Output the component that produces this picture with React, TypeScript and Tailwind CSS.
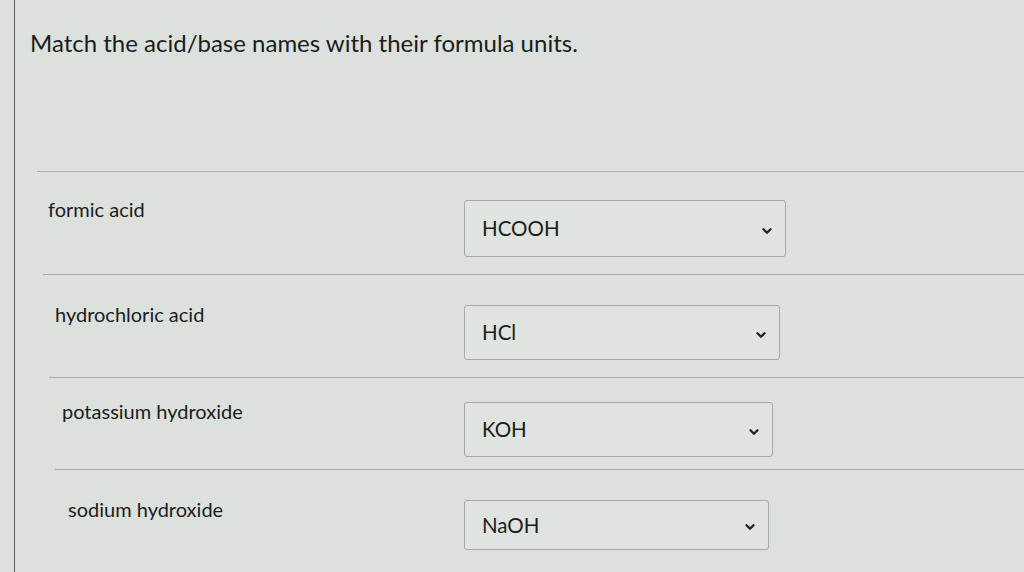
import { ChevronDown } from 'lucide-react';

const rows = [
  { name: 'formic acid', value: 'HCOOH', rowCls: 'h-[103px] ml-[22px]', labelCls: 'pl-[11px] pt-[24px]', selCls: 'mt-[28px] ml-[237px] w-[322px] h-[57px]' },
  { name: 'hydrochloric acid', value: 'HCl', rowCls: 'h-[103px] ml-[28px]', labelCls: 'pl-[12px] pt-[26px]', selCls: 'mt-[30px] ml-[231px] w-[316px] h-[55px]' },
  { name: 'potassium hydroxide', value: 'KOH', rowCls: 'h-[92px] ml-[34px]', labelCls: 'pl-[13px] pt-[20px]', selCls: 'mt-[24px] ml-[225px] w-[309px] h-[55px]' },
  { name: 'sodium hydroxide', value: 'NaOH', rowCls: 'h-[110px] ml-[40px]', labelCls: 'pl-[13px] pt-[26px]', selCls: 'mt-[30px] ml-[219px] w-[305px] h-[50px]' },
];

function Select({ value, className }: { value: string; className: string }) {
  return (
    <div className={`flex items-center justify-between shrink-0 border border-[#a3a9a6] rounded-[3px] bg-[#e0e4e1] pl-[17px] pr-[11px] ${className}`}>
      <span className="text-[20.5px] text-[#1a1d1b]">{value}</span>
      <ChevronDown size={14} strokeWidth={4} className="text-[#1f2321] mt-[4px]" />
    </div>
  );
}

export default function App() {
  return (
    <div className="w-[1024px] h-[572px] overflow-hidden bg-[#dde1de] font-['Lato','Noto_Sans',sans-serif]">
      <div className="ml-[14px] h-full border-l border-[#5b605d]">
        {/* Title */}
        <div className="pt-[27px] pl-[15px] text-[24px] text-[#1a1d1b] leading-[32px]">
          Match the acid/base names with their formula units.
        </div>

        {/* Rows */}
        <div className="mt-[112px]">
          {rows.map((r) => (
            <div key={r.name} className={`flex border-t border-[#a7adaa] ${r.rowCls}`}>
              <div className={`w-[190px] shrink-0 text-[20px] text-[#1a1d1b] leading-[26px] whitespace-nowrap ${r.labelCls}`}>
                {r.name}
              </div>
              <Select value={r.value} className={r.selCls} />
            </div>
          ))}
        </div>
      </div>
    </div>
  );
}
